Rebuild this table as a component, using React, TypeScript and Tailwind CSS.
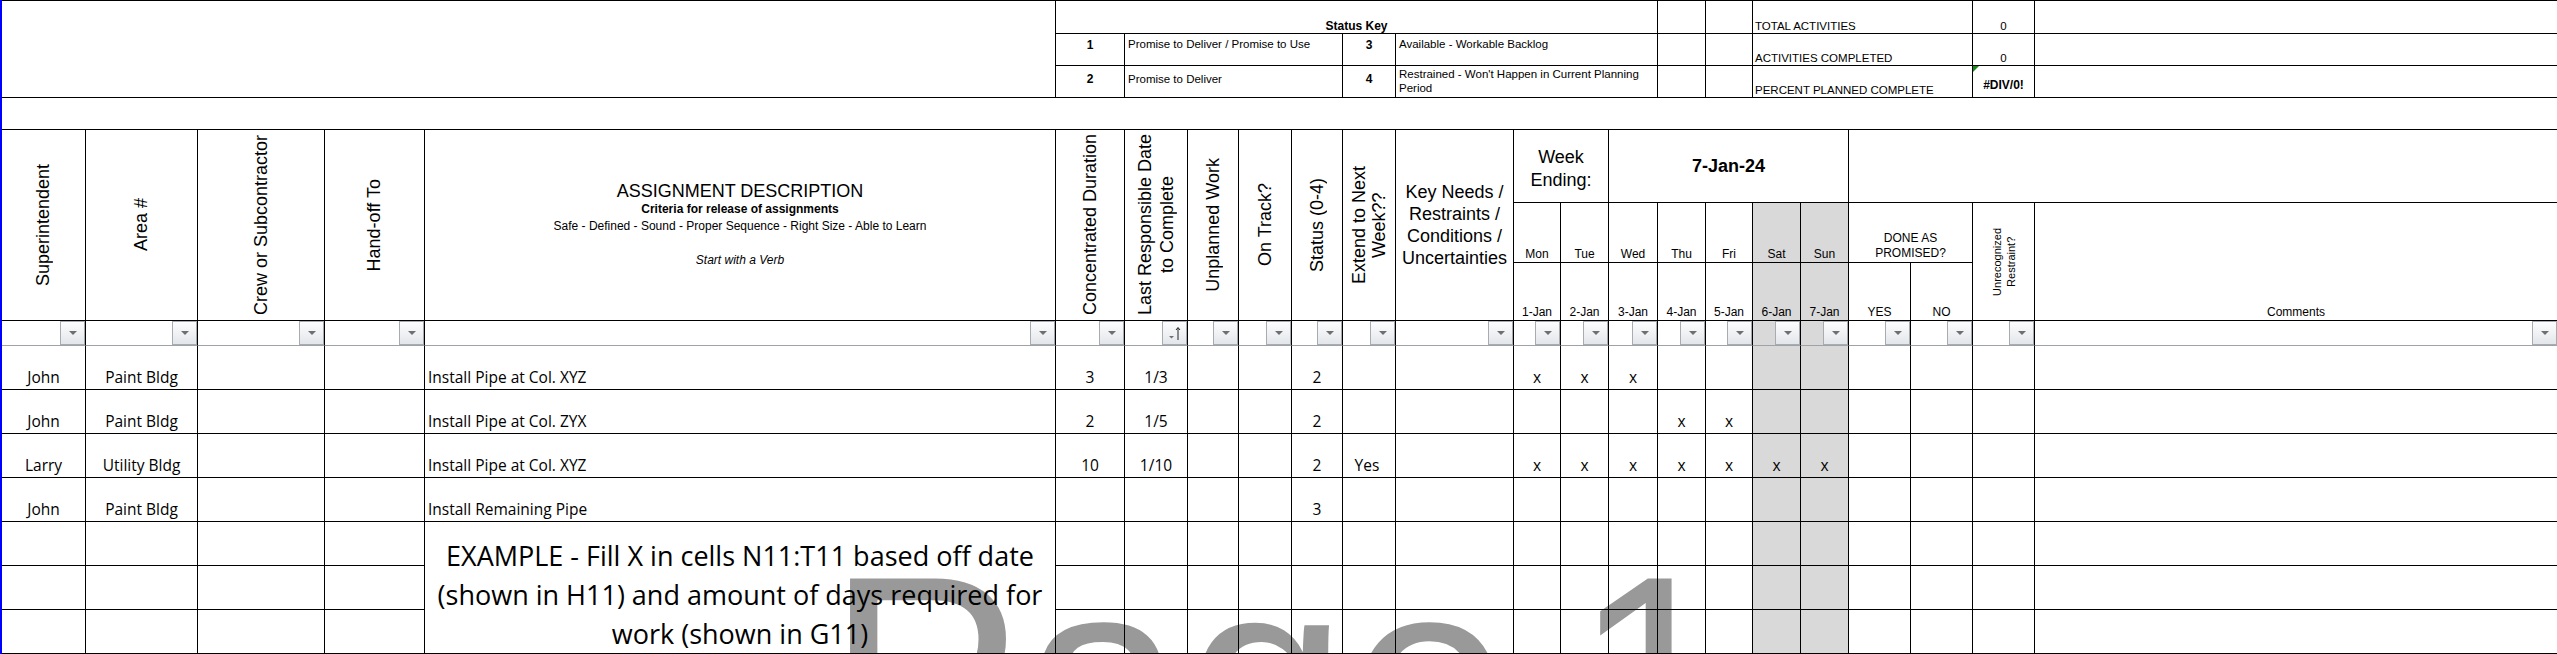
import React from "react";

const COLS =
  "grid grid-cols-[84px_112px_127px_100px_631px_69px_63px_51px_53px_51px_53px_118px_47px_48px_49px_48px_47px_48px_48px_62px_62px_62px_522px]";
const ARIAL = "font-['Liberation_Sans',Arial,sans-serif]";
const CAL = "font-['Open_Sans',sans-serif]";

function Tri() {
  return (
    <svg width="8" height="4" viewBox="0 0 8 4">
      <path d="M0 0 L8 0 L4 4 Z" fill="#6f6f6f" />
    </svg>
  );
}

function FBtn({ sort = false }: { sort?: boolean }) {
  return (
    <div className="w-[25px] h-full border border-[#a7acb3] bg-linear-to-b from-[#fdfdfe] to-[#e3e6ea] flex items-center justify-center">
      {sort ? (
        <svg width="16" height="16" viewBox="0 0 16 16">
          <path d="M2 11 L7 11 L4.5 13.5 Z" fill="#6f6f6f" />
          <path d="M11 15 L11 3" stroke="#222" strokeWidth="1" />
          <path d="M9 5 L11 2.5 L13 5" stroke="#222" strokeWidth="1" fill="none" />
        </svg>
      ) : (
        <Tri />
      )}
    </div>
  );
}

function Rot({ children, cls = "" }: { children: React.ReactNode; cls?: string }) {
  return (
    <span className={`[writing-mode:vertical-rl] rotate-180 text-center whitespace-nowrap ${cls}`}>
      {children}
    </span>
  );
}

function TopSection() {
  const b = "border-r border-b border-black";
  return (
    <div className={`${COLS} grid-rows-[33px_32px_32px_32px] border-t border-black ${ARIAL} text-[11.5px] leading-[14px]`}>
      <div className={`col-start-1 col-span-5 row-start-1 row-span-3 ${b}`} />
      {/* row 1 */}
      <div className={`col-start-6 col-span-10 row-start-1 ${b} flex items-end justify-center text-[12px] font-bold`}>
        Status Key
      </div>
      <div className={`col-start-16 row-start-1 ${b}`} />
      <div className={`col-start-17 row-start-1 ${b}`} />
      <div className={`col-start-18 col-span-4 row-start-1 ${b} flex items-end pl-[2px]`}>TOTAL ACTIVITIES</div>
      <div className={`col-start-22 row-start-1 ${b} flex items-end justify-center`}>0</div>
      <div className="col-start-23 row-start-1 border-b border-black" />
      {/* row 2 */}
      <div className={`col-start-6 row-start-2 ${b} flex items-start justify-center pt-[4px] text-[12px] font-bold`}>1</div>
      <div className={`col-start-7 col-span-4 row-start-2 ${b} flex items-start pl-[3px] pt-[3px]`}>
        Promise to Deliver / Promise to Use
      </div>
      <div className={`col-start-11 row-start-2 ${b} flex items-start justify-center pt-[4px] text-[12px] font-bold`}>3</div>
      <div className={`col-start-12 col-span-4 row-start-2 ${b} flex items-start pl-[3px] pt-[3px]`}>
        Available - Workable Backlog
      </div>
      <div className={`col-start-16 row-start-2 ${b}`} />
      <div className={`col-start-17 row-start-2 ${b}`} />
      <div className={`col-start-18 col-span-4 row-start-2 ${b} flex items-end pl-[2px]`}>ACTIVITIES COMPLETED</div>
      <div className={`col-start-22 row-start-2 ${b} flex items-end justify-center`}>0</div>
      <div className="col-start-23 row-start-2 border-b border-black" />
      {/* row 3 */}
      <div className={`col-start-6 row-start-3 ${b} flex items-start justify-center pt-[6px] text-[12px] font-bold`}>2</div>
      <div className={`col-start-7 col-span-4 row-start-3 ${b} flex items-start pl-[3px] pt-[6px]`}>Promise to Deliver</div>
      <div className={`col-start-11 row-start-3 ${b} flex items-start justify-center pt-[6px] text-[12px] font-bold`}>4</div>
      <div className={`col-start-12 col-span-4 row-start-3 ${b} pl-[3px] pt-[1px] leading-[14px]`}>
        Restrained - Won't Happen in Current Planning
        <br />
        Period
      </div>
      <div className={`col-start-16 row-start-3 ${b}`} />
      <div className={`col-start-17 row-start-3 ${b}`} />
      <div className={`col-start-18 col-span-4 row-start-3 ${b} flex items-end pl-[2px]`}>PERCENT PLANNED COMPLETE</div>
      <div className={`relative col-start-22 row-start-3 ${b} flex items-end justify-center pb-[5px] text-[12px] font-bold`}>
        <span className="absolute left-0 top-0 w-0 h-0 border-t-[6px] border-r-[6px] border-t-[#1a8a1a] border-r-transparent" />
        #DIV/0!
      </div>
      <div className="col-start-23 row-start-3 border-b border-black" />
      {/* row 4 */}
      <div className="col-start-1 col-span-23 row-start-4 border-b border-black" />
    </div>
  );
}

const DAYS = ["Mon", "Tue", "Wed", "Thu", "Fri", "Sat", "Sun"];
const DATES = ["1-Jan", "2-Jan", "3-Jan", "4-Jan", "5-Jan", "6-Jan", "7-Jan"];
const DAY_COL_R2 = [
  "col-start-13 row-start-2",
  "col-start-14 row-start-2",
  "col-start-15 row-start-2",
  "col-start-16 row-start-2",
  "col-start-17 row-start-2",
  "col-start-18 row-start-2 bg-[#d9d9d9]",
  "col-start-19 row-start-2 bg-[#d9d9d9]",
];
const DAY_COL_R3 = [
  "col-start-13 row-start-3",
  "col-start-14 row-start-3",
  "col-start-15 row-start-3",
  "col-start-16 row-start-3",
  "col-start-17 row-start-3",
  "col-start-18 row-start-3 bg-[#d9d9d9]",
  "col-start-19 row-start-3 bg-[#d9d9d9]",
];

function HeaderSection() {
  const b = "border-r border-b border-black";
  const rot = `row-start-1 row-span-3 ${b} flex items-center justify-center text-[18px]`;
  return (
    <div className={`${COLS} grid-rows-[73px_60px_58px] ${ARIAL}`}>
      <div className={`col-start-1 ${rot}`}><Rot cls="leading-[21px]">Superintendent</Rot></div>
      <div className={`col-start-2 ${rot}`}><Rot cls="leading-[21px]">Area #</Rot></div>
      <div className={`col-start-3 ${rot}`}><Rot cls="leading-[21px]">Crew or Subcontractor</Rot></div>
      <div className={`col-start-4 ${rot}`}><Rot cls="leading-[21px]">Hand-off To</Rot></div>
      <div className={`col-start-5 row-start-1 row-span-3 ${b} flex flex-col items-center justify-center text-center`}>
        <div className="text-[18px] leading-[20px]">ASSIGNMENT DESCRIPTION</div>
        <div className="text-[12px] leading-[17px] font-bold">Criteria for release of assignments</div>
        <div className="text-[12px] leading-[17px]">Safe - Defined - Sound - Proper Sequence - Right Size - Able to Learn</div>
        <div className="h-[17px]" />
        <div className="text-[12px] leading-[17px] italic">Start with a Verb</div>
      </div>
      <div className={`col-start-6 ${rot}`}><Rot cls="leading-[21px]">Concentrated Duration</Rot></div>
      <div className={`col-start-7 ${rot}`}>
        <Rot cls="leading-[22px]">
          Last Responsible Date
          <br />
          to Complete
        </Rot>
      </div>
      <div className={`col-start-8 ${rot}`}><Rot cls="leading-[21px]">Unplanned Work</Rot></div>
      <div className={`col-start-9 ${rot}`}><Rot cls="leading-[21px]">On Track?</Rot></div>
      <div className={`col-start-10 ${rot}`}><Rot cls="leading-[21px]">Status (0-4)</Rot></div>
      <div className={`col-start-11 ${rot}`}>
        <Rot cls="leading-[20px]">
          Extend to Next
          <br />
          Week??
        </Rot>
      </div>
      <div className={`col-start-12 ${rot} text-center leading-[22px]`}>
        <div>
          Key Needs /
          <br />
          Restraints /
          <br />
          Conditions /
          <br />
          Uncertainties
        </div>
      </div>
      <div className={`col-start-13 col-span-2 row-start-1 ${b} flex items-center justify-center text-center text-[18px] leading-[23px] pt-[6px]`}>
        <div>
          Week
          <br />
          Ending:
        </div>
      </div>
      <div className={`col-start-15 col-span-5 row-start-1 ${b} flex items-center justify-center text-[18px] font-bold`}>
        7-Jan-24
      </div>
      <div className="col-start-20 col-span-4 row-start-1 border-b border-black" />
      {DAYS.map((d, i) => (
        <div key={d} className={`${DAY_COL_R2[i]} ${b} flex items-end justify-center text-[12px] leading-[14px] pb-[1px]`}>
          {d}
        </div>
      ))}
      {DATES.map((d, i) => (
        <div key={d} className={`${DAY_COL_R3[i]} ${b} flex items-end justify-center text-[12px] leading-[14px] pb-[1px]`}>
          {d}
        </div>
      ))}
      <div className={`col-start-20 col-span-2 row-start-2 ${b} flex items-end justify-center text-center text-[12px] leading-[15px] pb-[1px]`}>
        <div>
          DONE AS
          <br />
          PROMISED?
        </div>
      </div>
      <div className={`col-start-20 row-start-3 ${b} flex items-end justify-center text-[12px] leading-[14px] pb-[1px]`}>YES</div>
      <div className={`col-start-21 row-start-3 ${b} flex items-end justify-center text-[12px] leading-[14px] pb-[1px]`}>NO</div>
      <div className={`col-start-22 row-start-2 row-span-2 ${b} flex items-center justify-center text-[11px]`}>
        <Rot cls="leading-[14px]">
          Unrecognized
          <br />
          Restraint?
        </Rot>
      </div>
      <div className="col-start-23 row-start-2 row-span-2 border-b border-black flex items-end justify-center text-[12px] leading-[14px] pb-[1px]">
        Comments
      </div>
    </div>
  );
}

type Row = {
  sup: string;
  area: string;
  desc: string;
  dur: string;
  date: string;
  status: string;
  ext: string;
  days: number[];
};

const ROWS: Row[] = [
  { sup: "John", area: "Paint Bldg", desc: "Install Pipe at Col. XYZ", dur: "3", date: "1/3", status: "2", ext: "", days: [1, 1, 1, 0, 0, 0, 0] },
  { sup: "John", area: "Paint Bldg", desc: "Install Pipe at Col. ZYX", dur: "2", date: "1/5", status: "2", ext: "", days: [0, 0, 0, 1, 1, 0, 0] },
  { sup: "Larry", area: "Utility Bldg", desc: "Install Pipe at Col. XYZ", dur: "10", date: "1/10", status: "2", ext: "Yes", days: [1, 1, 1, 1, 1, 1, 1] },
  { sup: "John", area: "Paint Bldg", desc: "Install Remaining Pipe", dur: "", date: "", status: "3", ext: "", days: [0, 0, 0, 0, 0, 0, 0] },
];

function DataSection() {
  const cells: React.ReactNode[] = [];
  for (let c = 1; c <= 23; c++) {
    const gray = c === 18 || c === 19 ? "bg-[#d9d9d9]" : "";
    const br = c === 23 ? "" : "border-r border-r-black";
    cells.push(
      <div key={`f${c}`} className={`h-[25px] ${br} border-b border-b-[#9fa3a8] flex justify-end ${gray}`}>
        <FBtn sort={c === 7} />
      </div>
    );
  }
  const base = "h-[44px] border-b border-black flex items-end pb-[2px] text-[15.5px] leading-[20px]";
  const all = [...ROWS, null, null, null];
  all.forEach((r, ri) => {
    for (let c = 1; c <= 23; c++) {
      if (r === null && c === 5) continue;
      let txt = "";
      if (r) {
        if (c === 1) txt = r.sup;
        else if (c === 2) txt = r.area;
        else if (c === 5) txt = r.desc;
        else if (c === 6) txt = r.dur;
        else if (c === 7) txt = r.date;
        else if (c === 10) txt = r.status;
        else if (c === 11) txt = r.ext;
        else if (c >= 13 && c <= 19) txt = r.days[c - 13] ? "x" : "";
      }
      const gray = c === 18 || c === 19 ? "bg-[#d9d9d9]" : "";
      const br = c === 23 ? "" : "border-r";
      const al = c === 5 ? "justify-start pl-[3px]" : c === 11 ? "justify-center pr-[4px]" : "justify-center";
      cells.push(
        <div key={`r${ri}c${c}`} className={`${base} ${br} ${al} ${gray}`}>
          {txt}
        </div>
      );
    }
  });
  return (
    <div className={`${COLS} ${CAL}`}>
      {cells}
      <div className="col-start-5 row-start-6 row-span-3 border-r border-b border-black flex items-end justify-center text-center text-[27px] leading-[39px] whitespace-nowrap">
        <div>
          EXAMPLE - Fill X in cells N11:T11 based off date
          <br />
          (shown in H11) and amount of days required for
          <br />
          work (shown in G11)
        </div>
      </div>
    </div>
  );
}

function Watermark() {
  const g = `absolute top-[532px] text-[293px] leading-none text-[#999999] whitespace-nowrap ${ARIAL}`;
  return (
    <div className="absolute inset-0 z-0 pointer-events-none select-none">
      <span className={`${g} left-[826px]`}>P</span>
      <span className={`${g} left-[1022px]`}>a</span>
      <span className={`${g} left-[1185px]`}>g</span>
      <span className={`${g} left-[1348px]`}>e</span>
      <span className={`${g} left-[1572px]`}>1</span>
    </div>
  );
}

export default function App() {
  return (
    <div className="relative w-[2557px] h-[654px] overflow-hidden bg-white text-black">
      <Watermark />
      <div className="relative z-10 border-l-2 border-l-[#0000ff]">
        <TopSection />
        <HeaderSection />
        <DataSection />
      </div>
    </div>
  );
}
